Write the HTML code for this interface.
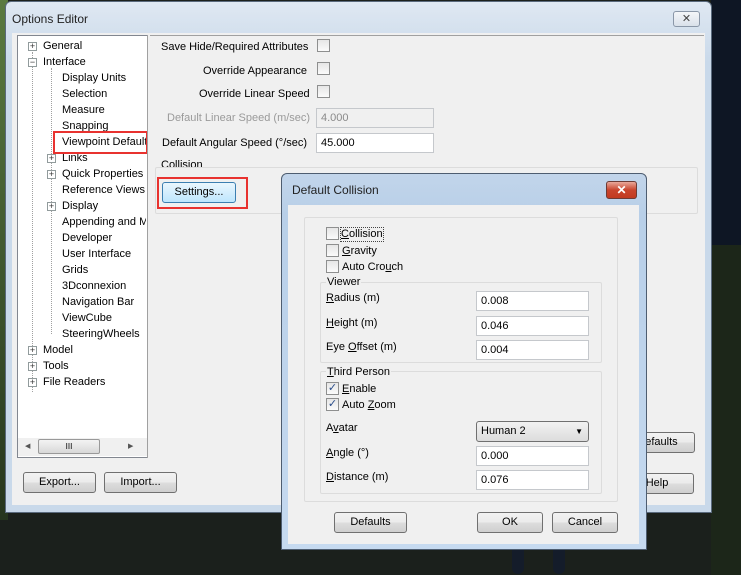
<!DOCTYPE html>
<html><head><meta charset="utf-8"><style>
*{box-sizing:border-box;margin:0;padding:0}
body{width:741px;height:574px;overflow:hidden;background:#1b201c;font-family:"Liberation Sans",sans-serif;font-size:11px;color:#000;position:relative}
.a{position:absolute}
.t{position:absolute;white-space:nowrap;line-height:13px}
.cb{position:absolute;width:13px;height:13px;border:1px solid #8e8f8f;background:linear-gradient(#e6e6e6,#fbfbfb)}
.tb{position:absolute;height:20px;background:#fff;border:1px solid #c5c8cc;padding:3px 4px;line-height:13px}
.btn{position:absolute;height:21px;border:1px solid #707070;border-radius:3px;background:linear-gradient(#f2f2f2 0,#ebebeb 50%,#dddddd 51%,#cfcfcf 100%);text-align:center;line-height:19px}
.grp{position:absolute;border:1px solid #dcdcdc;border-radius:2px}
.exp{position:absolute;width:9px;height:9px;border:1px solid #919b9c;background:#fff;font-size:9px;line-height:7px;text-align:center;color:#333}
u{text-decoration:underline}
</style></head><body>
<div class="a" style="left:0;top:0;width:8px;height:520px;background:linear-gradient(#5a7a40,#26361e)"></div>
<div class="a" style="left:711px;top:0;width:30px;height:574px;background:#0e1624"></div>
<div class="a" style="left:711px;top:245px;width:30px;height:330px;background:#1c2619"></div>
<!-- Options Editor -->
<div class="a" style="left:5px;top:1px;width:707px;height:512px;background:linear-gradient(#dfe8f2,#c9d9ea 60px,#c9d9ea);border:1px solid #5a6a7d;border-radius:6px 6px 0 0"></div>
<div class="t" style="left:12px;top:13px;font-size:12px;color:#222">Options Editor</div>
<div class="a" style="left:673px;top:11px;width:27px;height:16px;border:1px solid #8a97a8;border-radius:3px;background:linear-gradient(#f4f6f9,#d9e1ea);text-align:center;font-size:11px;line-height:14px;color:#444">✕</div>
<div class="a" style="left:12px;top:33px;width:693px;height:472px;background:#f0f0f0"></div>
<!-- tree -->
<div class="a" style="left:17px;top:35px;width:131px;height:423px;background:#fff;border:1px solid #828790"></div>
<div class="a" style="left:32px;top:52px;height:340px;border-left:1px dotted #a0a0a0"></div>
<div class="a" style="left:51px;top:68px;height:266px;border-left:1px dotted #a0a0a0"></div>
<div class="exp" style="left:28px;top:42px">+</div><div class="t" style="left:43px;top:40px">General</div>
<div class="exp" style="left:28px;top:58px">−</div><div class="t" style="left:43px;top:56px">Interface</div>
<div class="t" style="left:62px;top:72px">Display Units</div>
<div class="t" style="left:62px;top:88px">Selection</div>
<div class="t" style="left:62px;top:104px">Measure</div>
<div class="t" style="left:62px;top:120px">Snapping</div>
<div class="t" style="left:62px;top:136px;width:84px;overflow:hidden">Viewpoint Defaults</div>
<div class="exp" style="left:47px;top:154px">+</div><div class="t" style="left:62px;top:152px">Links</div>
<div class="exp" style="left:47px;top:170px">+</div><div class="t" style="left:62px;top:168px;width:84px;overflow:hidden">Quick Properties</div>
<div class="t" style="left:62px;top:184px;width:84px;overflow:hidden">Reference Views</div>
<div class="exp" style="left:47px;top:202px">+</div><div class="t" style="left:62px;top:200px">Display</div>
<div class="t" style="left:62px;top:216px;width:84px;overflow:hidden">Appending and Merging</div>
<div class="t" style="left:62px;top:232px">Developer</div>
<div class="t" style="left:62px;top:248px">User Interface</div>
<div class="t" style="left:62px;top:264px">Grids</div>
<div class="t" style="left:62px;top:280px">3Dconnexion</div>
<div class="t" style="left:62px;top:296px">Navigation Bar</div>
<div class="t" style="left:62px;top:312px">ViewCube</div>
<div class="t" style="left:62px;top:328px">SteeringWheels</div>
<div class="exp" style="left:28px;top:346px">+</div><div class="t" style="left:43px;top:344px">Model</div>
<div class="exp" style="left:28px;top:362px">+</div><div class="t" style="left:43px;top:360px">Tools</div>
<div class="exp" style="left:28px;top:378px">+</div><div class="t" style="left:43px;top:376px">File Readers</div>
<div class="a" style="left:18px;top:438px;width:129px;height:18px;background:#f0f0f0"></div>
<div class="a" style="left:38px;top:439px;width:62px;height:15px;border:1px solid #999;border-radius:2px;background:linear-gradient(#f3f3f3,#d8d8d8);font-size:8px;text-align:center;line-height:13px">III</div>
<div class="t" style="left:25px;top:440px;font-size:7px;color:#555">◀</div>
<div class="t" style="left:128px;top:440px;font-size:7px;color:#555">▶</div>
<div class="a" style="left:53px;top:131px;width:95px;height:23px;border:2px solid #e8322f"></div>
<!-- right panel -->
<div class="a" style="left:147px;top:35px;width:3px;height:423px;border-left:1px solid #a0a0a0"></div>
<div class="a" style="left:150px;top:35px;width:554px;height:1px;background:#a0a0a0"></div>
<div class="t" style="left:161px;top:41px">Save Hide/Required Attributes</div>
<div class="cb" style="left:317px;top:39px"></div>
<div class="t" style="left:203px;top:65px">Override Appearance</div>
<div class="cb" style="left:317px;top:62px"></div>
<div class="t" style="left:199px;top:88px">Override Linear Speed</div>
<div class="cb" style="left:317px;top:85px"></div>
<div class="t" style="left:167px;top:112px;color:#9a9a9a">Default Linear Speed (m/sec)</div>
<div class="tb" style="left:316px;top:108px;width:118px;background:#f0f0f0;color:#8a8a8a">4.000</div>
<div class="t" style="left:162px;top:137px">Default Angular Speed (°/sec)</div>
<div class="tb" style="left:316px;top:133px;width:118px">45.000</div>
<div class="t" style="left:161px;top:159px">Collision</div>
<div class="grp" style="left:155px;top:167px;width:543px;height:47px"></div>
<div class="btn" style="left:162px;top:182px;width:74px;border-color:#3c7fb1;background:linear-gradient(#eaf6fd,#bee6fd)">Settings...</div>
<div class="a" style="left:157px;top:177px;width:91px;height:32px;border:2px solid #e8322f"></div>
<div class="btn" style="left:620px;top:432px;width:75px">Defaults</div>
<div class="btn" style="left:620px;top:473px;width:74px">Help</div>
<div class="btn" style="left:23px;top:472px;width:73px">Export...</div>
<div class="btn" style="left:104px;top:472px;width:73px">Import...</div>
<!-- dialog -->
<div class="a" style="left:281px;top:173px;width:366px;height:377px;background:linear-gradient(#c2d5ea,#b8cfe8 40px,#c6daf0);border:1px solid #4e5d70;border-radius:6px 6px 0 0"></div>
<div class="t" style="left:292px;top:184px;font-size:12px;color:#222">Default Collision</div>
<div class="a" style="left:606px;top:181px;width:31px;height:18px;border:1px solid #6d3b35;border-radius:3px;background:linear-gradient(#e9a99b,#c9452d 50%,#c23a20);color:#fff;text-align:center;font-weight:bold;font-size:12px;line-height:16px">✕</div>
<div class="a" style="left:288px;top:205px;width:351px;height:339px;background:#f0f0f0"></div>
<div class="grp" style="left:304px;top:217px;width:314px;height:285px"></div>
<div class="cb" style="left:326px;top:227px"></div><div class="t" style="left:341px;top:228px;outline:1px dotted #444"><u>C</u>ollision</div>
<div class="cb" style="left:326px;top:244px"></div><div class="t" style="left:342px;top:245px"><u>G</u>ravity</div>
<div class="cb" style="left:326px;top:260px"></div><div class="t" style="left:342px;top:261px">Auto Cro<u>u</u>ch</div>
<div class="grp" style="left:320px;top:282px;width:282px;height:81px"></div>
<div class="t" style="left:326px;top:276px;background:#f0f0f0;padding:0 1px">Viewer</div>
<div class="t" style="left:326px;top:292px"><u>R</u>adius (m)</div>
<div class="tb" style="left:476px;top:291px;width:113px">0.008</div>
<div class="t" style="left:326px;top:317px"><u>H</u>eight (m)</div>
<div class="tb" style="left:476px;top:316px;width:113px">0.046</div>
<div class="t" style="left:326px;top:341px">Eye <u>O</u>ffset (m)</div>
<div class="tb" style="left:476px;top:340px;width:113px">0.004</div>
<div class="grp" style="left:320px;top:371px;width:282px;height:123px"></div>
<div class="t" style="left:326px;top:366px;background:#f0f0f0;padding:0 1px"><u>T</u>hird Person</div>
<div class="cb" style="left:326px;top:382px;text-align:center;font-size:11px;line-height:11px;color:#2a4d8a">✓</div><div class="t" style="left:342px;top:383px"><u>E</u>nable</div>
<div class="cb" style="left:326px;top:398px;text-align:center;font-size:11px;line-height:11px;color:#2a4d8a">✓</div><div class="t" style="left:342px;top:399px">Auto <u>Z</u>oom</div>
<div class="t" style="left:326px;top:422px">A<u>v</u>atar</div>
<div class="a" style="left:476px;top:421px;width:113px;height:21px;border:1px solid #707070;border-radius:3px;background:linear-gradient(#f2f2f2,#dcdcdc);padding:3px 4px;line-height:13px">Human 2<span style="position:absolute;right:5px;top:3px;font-size:8px">▼</span></div>
<div class="t" style="left:326px;top:447px"><u>A</u>ngle (°)</div>
<div class="tb" style="left:476px;top:446px;width:113px">0.000</div>
<div class="t" style="left:326px;top:471px"><u>D</u>istance (m)</div>
<div class="tb" style="left:476px;top:470px;width:113px">0.076</div>
<div class="btn" style="left:334px;top:512px;width:73px">Defaults</div>
<div class="btn" style="left:477px;top:512px;width:66px">OK</div>
<div class="btn" style="left:552px;top:512px;width:66px">Cancel</div>
<div class="a" style="left:512px;top:550px;width:12px;height:24px;background:#141c2a;border-radius:0 0 6px 6px"></div>
<div class="a" style="left:553px;top:550px;width:12px;height:24px;background:#141c2a;border-radius:0 0 6px 6px"></div>
</body></html>
